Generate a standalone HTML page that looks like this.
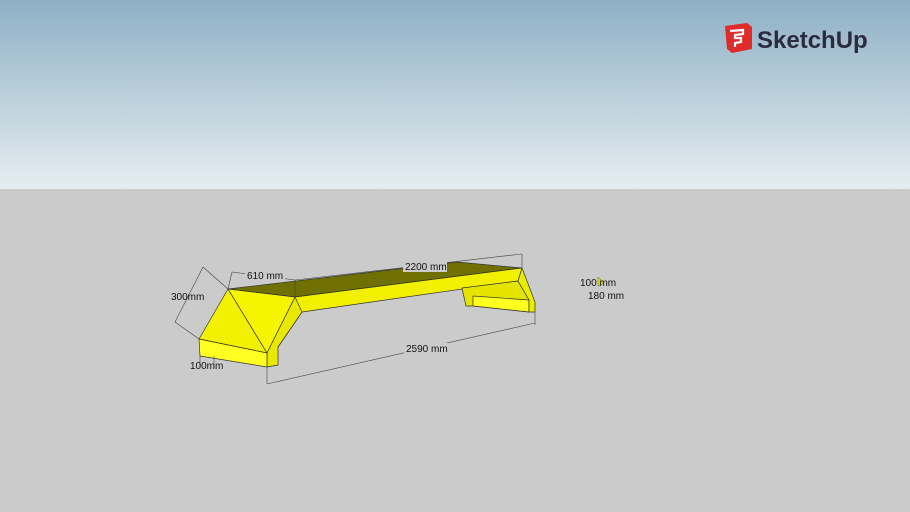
<!DOCTYPE html>
<html><head><style>
html,body{margin:0;padding:0;width:910px;height:512px;overflow:hidden;font-family:"Liberation Sans",sans-serif}
.sky{position:absolute;left:0;top:0;width:910px;height:189px;background:linear-gradient(#8eb0c6,#c3d5df 60%,#e6edf0)}
.ground{position:absolute;left:0;top:189px;width:910px;height:323px;background:#cbcbcb}
svg{position:absolute;left:0;top:0}
</style></head><body>
<div class="sky"></div><div class="ground"></div>
<svg width="910" height="512" font-family="Liberation Sans, sans-serif" font-size="10">
<g stroke="#333" stroke-width="0.7" stroke-linejoin="round">
<!-- top dark face -->
<polygon points="228,289 457,262 522,268 295,297" fill="#707000"/>
<!-- long front face -->
<polygon points="295,297 522,268 518,281 302,312 278,347 267,353" fill="#f0f000"/>
<!-- right inner leg -->
<polygon points="462,288 518,281 529,300 529,312 473,306 466,306" fill="#e4e400"/>
<polygon points="473,296 529,300 529,312 473,306" fill="#ffff20"/>
<polygon points="518,281 522,268 535,302 535,312 529,312 529,300" fill="#ecec00"/>
<!-- left end triangle face -->
<polygon points="228,289 199,339 267,353" fill="#f2f200"/>
<polygon points="228,289 295,297 267,353" fill="#f5f500"/>
<polygon points="267,353 295,297 302,312 278,347 278,365 267,367" fill="#e8e800"/>
<!-- front low face -->
<polygon points="199,339 267,353 267,367 200,356" fill="#ffff22"/>
</g>
<g stroke="#444" stroke-width="0.6" fill="none">
<line x1="203" y1="267" x2="175" y2="322"/><line x1="203" y1="267" x2="228" y2="289"/><line x1="175" y1="322" x2="199" y2="339"/>
<line x1="232" y1="272" x2="295" y2="280"/><line x1="232" y1="272" x2="228" y2="289"/><line x1="295" y1="280" x2="295" y2="297"/>
<line x1="295" y1="280" x2="522" y2="254"/><line x1="522" y1="254" x2="522" y2="268"/>
<line x1="267" y1="367" x2="267" y2="384"/><line x1="267" y1="384" x2="535" y2="323"/><line x1="535" y1="312" x2="535" y2="325"/>
<line x1="200" y1="356" x2="200" y2="368"/><line x1="214" y1="356" x2="214" y2="368"/>
</g>
<g fill="#111">
<rect x="403" y="261" width="44" height="11" fill="#cbcbcb"/>
<text x="405" y="270">2200 mm</text>
<rect x="245" y="270" width="40" height="11" fill="#cbcbcb"/>
<text x="247" y="279">610 mm</text>
<text x="171" y="300">300mm</text>
<rect x="404" y="343" width="44" height="11" fill="#cbcbcb"/>
<text x="406" y="352">2590 mm</text>
<text x="190" y="369">100mm</text>
<polygon points="598,277 604,283 598,286" fill="#e0e000" stroke="#555" stroke-width="0.5"/>
<text x="580" y="286">100 mm</text>
<text x="588" y="299">180 mm</text>
</g>
<!-- logo -->
<g transform="translate(725,23)">
<polygon points="0,3 22,0 27,4 27,26 7,30 2,26" fill="#e02b2b"/>
<path d="M5,8 L18,7 L18,11 L10,12 L10,15 L16,15 L16,19 L10,20 L10,24" stroke="#fff" stroke-width="2.2" fill="none"/>
</g>
<text x="757" y="48" font-size="24" font-weight="bold" fill="#2c2c40">SketchUp</text>
</svg>
</body></html>
